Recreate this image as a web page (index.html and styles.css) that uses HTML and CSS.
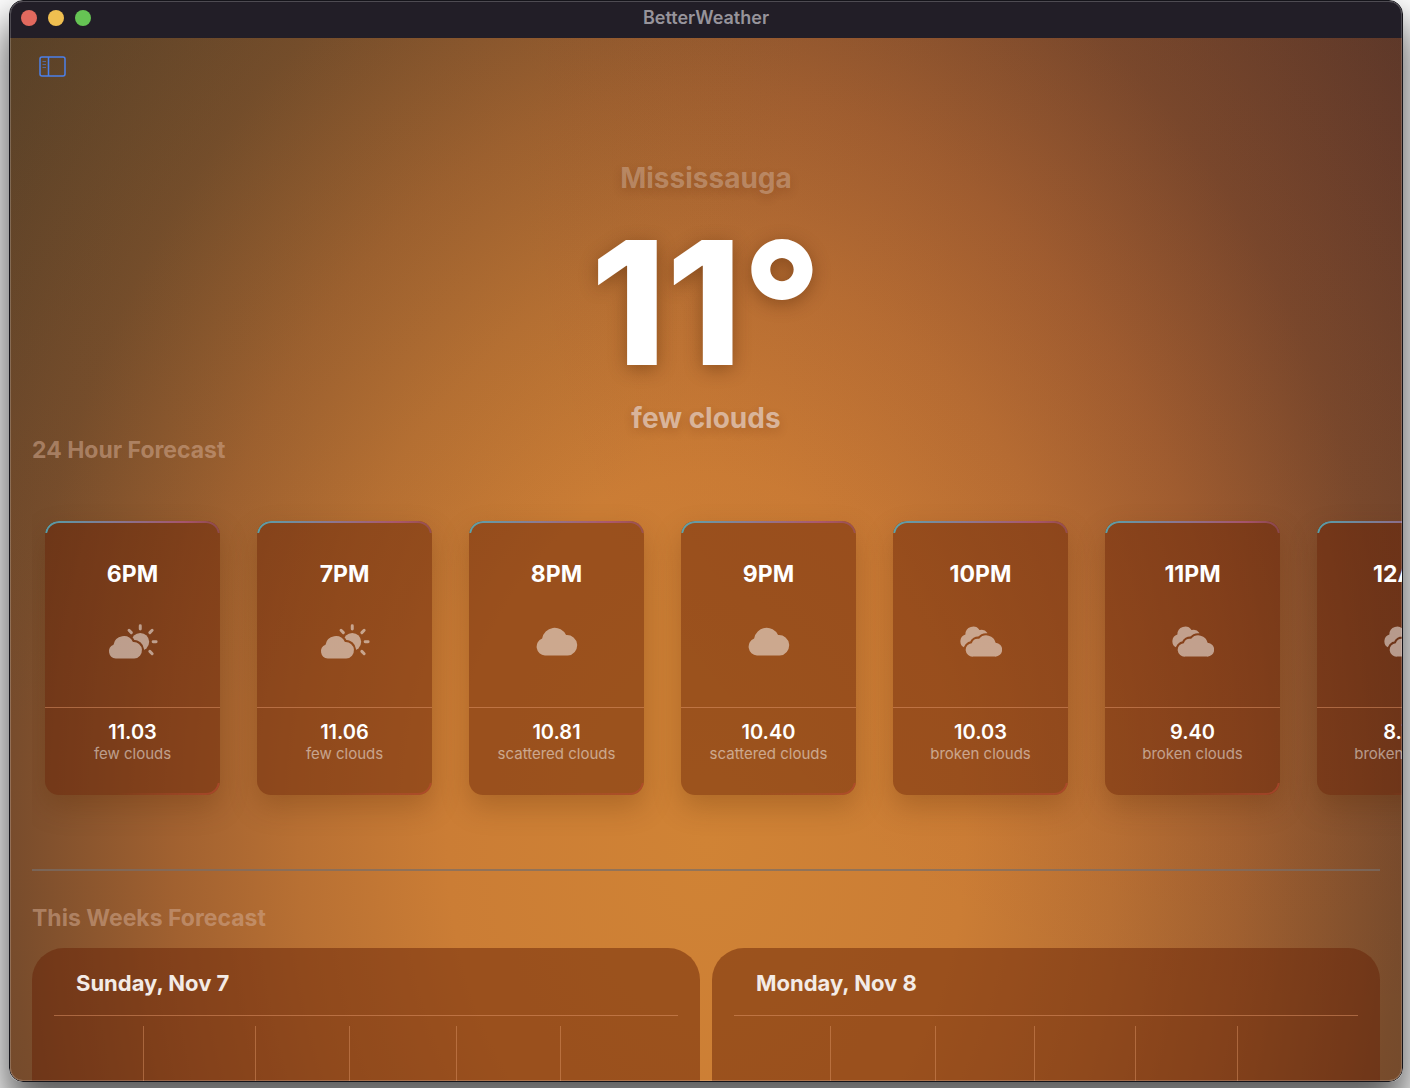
FILE: index.html
```html
<!DOCTYPE html>
<html lang="en">
<head>
<meta charset="utf-8">
<meta name="viewport" content="width=device-width, initial-scale=1">
<title>BetterWeather</title>
<link rel="stylesheet" href="styles.css">
</head>
<body>
<svg class="symbols" aria-hidden="true">
  <defs>
    <path id="cloud-shape" d="M27 83A26 26 0 0 1 19 33A37 37 0 0 1 89 23A30 30 0 0 1 94 83Z"/>
    <path id="front-cloud" d="M42 91A20 20 0 0 1 38 51A20 20 0 0 1 60 38A28 28 0 0 1 109 50A20 20 0 0 1 107 91Z"/>
    <mask id="sun-cut" maskUnits="userSpaceOnUse" x="0" y="0" width="150" height="106">
      <rect width="150" height="106" fill="white"/>
      <use href="#cloud-shape" transform="translate(0 35) scale(.84)" fill="black" stroke="black" stroke-width="16"/>
    </mask>
    <mask id="cloud-cut" maskUnits="userSpaceOnUse" x="0" y="0" width="128" height="92">
      <rect width="128" height="92" fill="white"/>
      <use href="#front-cloud" fill="black" stroke="black" stroke-width="13"/>
    </mask>
  </defs>
  <symbol id="few" viewBox="0 0 150 106">
    <use href="#cloud-shape" transform="translate(0 35) scale(.84)"/>
    <circle cx="97" cy="54" r="27" mask="url(#sun-cut)"/>
    <path d="M97 5V15M126 26L133 19M136 54H145M126 83L133 90M63 19L70 26" fill="none" stroke="currentColor" stroke-width="9" stroke-linecap="round"/>
  </symbol>
  <symbol id="scattered" viewBox="1 0 123 84">
    <use href="#cloud-shape"/>
  </symbol>
  <symbol id="broken" viewBox="0 0 128 92">
    <path d="M16 64A21 21 0 0 1 19 25A23 23 0 0 1 61 12Q76 8 84 20V40L40 66Z" mask="url(#cloud-cut)"/>
    <use href="#front-cloud"/>
  </symbol>
</svg>

<div class="window">
  <header class="titlebar">
    <div class="lights">
      <button class="light close" aria-label="Close"></button>
      <button class="light minimize" aria-label="Minimize"></button>
      <button class="light zoom" aria-label="Zoom"></button>
    </div>
    <span class="title">BetterWeather</span>
  </header>

  <main class="content">
    <button class="sidebar-toggle" aria-label="Toggle sidebar">
      <svg viewBox="0 0 27 21" width="27" height="21" fill="none" stroke="currentColor">
        <rect x="1" y="1" width="25" height="19" rx="2" stroke-width="1.5"/>
        <path d="M9.5 1V20" stroke-width="1.5"/>
        <path d="M3.5 5.5H7M3.5 8.5H7M3.5 11.5H7" stroke-width="1" opacity=".6"/>
      </svg>
    </button>

    <section class="current">
      <h1 class="city">Mississauga</h1>
      <p class="temperature">11°</p>
      <p class="condition">few clouds</p>
    </section>

    <section class="hourly">
      <h2 class="heading">24 Hour Forecast</h2>
      <ul class="hours">
        <li class="hour"><h3 class="time">6PM</h3><div class="sky"><svg class="icon-few"><use href="#few"/></svg></div><p class="value">11.03</p><p class="detail">few clouds</p></li>
        <li class="hour"><h3 class="time">7PM</h3><div class="sky"><svg class="icon-few"><use href="#few"/></svg></div><p class="value">11.06</p><p class="detail">few clouds</p></li>
        <li class="hour"><h3 class="time">8PM</h3><div class="sky"><svg class="icon-cloud"><use href="#scattered"/></svg></div><p class="value">10.81</p><p class="detail">scattered clouds</p></li>
        <li class="hour"><h3 class="time">9PM</h3><div class="sky"><svg class="icon-cloud"><use href="#scattered"/></svg></div><p class="value">10.40</p><p class="detail">scattered clouds</p></li>
        <li class="hour"><h3 class="time">10PM</h3><div class="sky"><svg class="icon-broken"><use href="#broken"/></svg></div><p class="value">10.03</p><p class="detail">broken clouds</p></li>
        <li class="hour"><h3 class="time">11PM</h3><div class="sky"><svg class="icon-broken"><use href="#broken"/></svg></div><p class="value">9.40</p><p class="detail">broken clouds</p></li>
        <li class="hour"><h3 class="time">12AM</h3><div class="sky"><svg class="icon-broken"><use href="#broken"/></svg></div><p class="value">8.70</p><p class="detail">broken clouds</p></li>
      </ul>
    </section>

    <section class="weekly">
      <h2 class="heading">This Weeks Forecast</h2>
      <div class="days">
        <article class="day">
          <h3 class="date">Sunday, Nov 7</h3>
          <div class="stats sunday"><div></div><div></div><div></div><div></div><div></div><div></div></div>
        </article>
        <article class="day">
          <h3 class="date">Monday, Nov 8</h3>
          <div class="stats monday"><div></div><div></div><div></div><div></div><div></div><div></div></div>
        </article>
      </div>
    </section>
  </main>
</div>
</body>
</html>
```
FILE: styles.css
```css
* {
  box-sizing: border-box;
  margin: 0;
  padding: 0;
}

body {
  background: #fff;
  font-family: Inter, "Liberation Sans", sans-serif;
  color: #fff;
  overflow: hidden;
}

button {
  border: 0;
  background: none;
}

.symbols {
  position: absolute;
  width: 0;
  height: 0;
}

.window {
  position: relative;
  display: flex;
  flex-direction: column;
  height: calc(100vh - 6px);
  margin: 0 7px 6px 9px;
  border: 1px solid #15141a;
  border-radius: 14px;
  overflow: hidden;
  box-shadow: 0 24px 40px 4px rgba(0, 0, 0, .65);
}

/* light rim just inside the window frame */
.window::after {
  content: "";
  position: absolute;
  inset: 0;
  border: 1px solid rgba(255, 255, 255, .2);
  border-radius: 13px;
  pointer-events: none;
}

.titlebar {
  display: grid;
  grid-template-columns: 1fr auto 1fr;
  align-items: center;
  flex: none;
  height: 37px;
  padding: 0 11px 3px;
  background: #221e27;
}

.lights {
  display: flex;
  gap: 11px;
}

.light {
  width: 16px;
  height: 16px;
  border-radius: 50%;
}

.close { background: #e2695e; }
.minimize { background: #f0bf50; }
.zoom { background: #66c454; }

.title {
  font-size: 18px;
  font-weight: 600;
  line-height: 22px;
  color: #97949b;
}

.content {
  flex: 1;
  min-height: 0;
  overflow: hidden;
  background:
    radial-gradient(800px 700px at 0 0, rgba(80, 85, 30, .16), rgba(80, 85, 30, 0)),
    radial-gradient(900px 900px at 100% 10%, rgba(130, 20, 40, .12), rgba(130, 20, 40, 0)),
    radial-gradient(740px 1040px at 50% 800px, #d08335 0, #cb7d35 35%, #b87033 55%, #a16130 72%, #784c2c 94%, #563b29 125%);
}

.sidebar-toggle {
  display: block;
  width: 27px;
  height: 21px;
  margin: 18px 29px 0;
  color: #4b80ea;
}

.sidebar-toggle svg {
  display: block;
}

.current {
  display: flex;
  flex-direction: column;
  align-items: center;
  padding-top: 81px;
}

.city,
.condition {
  font-size: 28px;
  font-weight: 700;
  text-shadow: 0 4px 10px rgba(80, 30, 0, .2);
}

.city {
  line-height: 40px;
  color: rgba(205, 170, 145, .55);
}

.condition {
  margin-bottom: 5px;
  line-height: 24px;
  color: #d9b49a;
}

.temperature {
  font-size: 172px;
  font-weight: 800;
  line-height: 208px;
  text-shadow: 0 4px 18px rgba(70, 30, 0, .4);
}

.heading {
  font-size: 23px;
  font-weight: 700;
  line-height: 30px;
  color: rgba(210, 170, 145, .55);
}

.hourly,
.weekly {
  margin: 0 22px;
}

.hours {
  display: flex;
  gap: 37px;
  margin-right: -22px;
  padding: 56px 0 74px 13px;
  list-style: none;
  overflow: hidden;
}

.hour {
  position: relative;
  flex: none;
  width: 175px;
  height: 274px;
  padding-top: 38px;
  border-radius: 14px;
  background: rgba(100, 32, 4, .48);
  box-shadow: 0 12px 28px rgba(80, 35, 0, .25);
  text-align: center;
}

/* cyan to pink rim along the top, red glint at the bottom right */
.hour::before {
  content: "";
  position: absolute;
  inset: 0;
  padding: 2px;
  border-radius: 14px;
  background:
    linear-gradient(90deg, #4fb8cc, #8a86b0 40%, #b05a80 80%, rgba(154, 85, 128, .6)) top / 100% 12px no-repeat,
    linear-gradient(90deg, transparent 40%, rgba(192, 74, 53, .7)) bottom / 100% 12px no-repeat;
  mask: linear-gradient(#000 0 0) content-box exclude, linear-gradient(#000 0 0);
  opacity: .8;
}

.time {
  font-size: 23px;
  font-weight: 700;
  line-height: 30px;
}

.sky {
  display: flex;
  align-items: center;
  justify-content: center;
  height: 119px;
  padding-bottom: 14px;
  border-bottom: 1px solid rgba(225, 150, 105, .5);
}

.sky svg {
  fill: currentColor;
  opacity: .5;
}

.icon-few { width: 50px; height: 35px; }
.icon-cloud { width: 42px; height: 29px; }
.icon-broken { width: 43px; height: 31px; }

.value {
  margin-top: 12px;
  font-size: 20px;
  font-weight: 600;
  line-height: 24px;
}

.detail {
  font-size: 15px;
  line-height: 20px;
  color: rgba(255, 255, 255, .5);
}

.weekly {
  padding-top: 32px;
  border-top: 2px solid rgba(120, 110, 105, .7);
}

.days {
  display: grid;
  grid-template-columns: 1fr 1fr;
  gap: 12px;
  margin-top: 15px;
}

.day {
  padding: 18px 22px;
  border-radius: 32px;
  background: rgba(100, 32, 4, .48);
}

.date {
  padding: 0 22px 15px;
  border-bottom: 1px solid rgba(225, 150, 105, .5);
  font-size: 22px;
  font-weight: 700;
  line-height: 34px;
  color: #f3ebe6;
}

.stats {
  display: grid;
  height: 120px;
  margin-top: 10px;
}

.sunday { grid-template-columns: 89fr 113fr 94fr 107fr 105fr 118fr; }
.monday { grid-template-columns: 96fr 105fr 99fr 102fr 102fr 121fr; }

.stats div + div {
  border-left: 1px solid rgba(225, 150, 105, .45);
}
```
